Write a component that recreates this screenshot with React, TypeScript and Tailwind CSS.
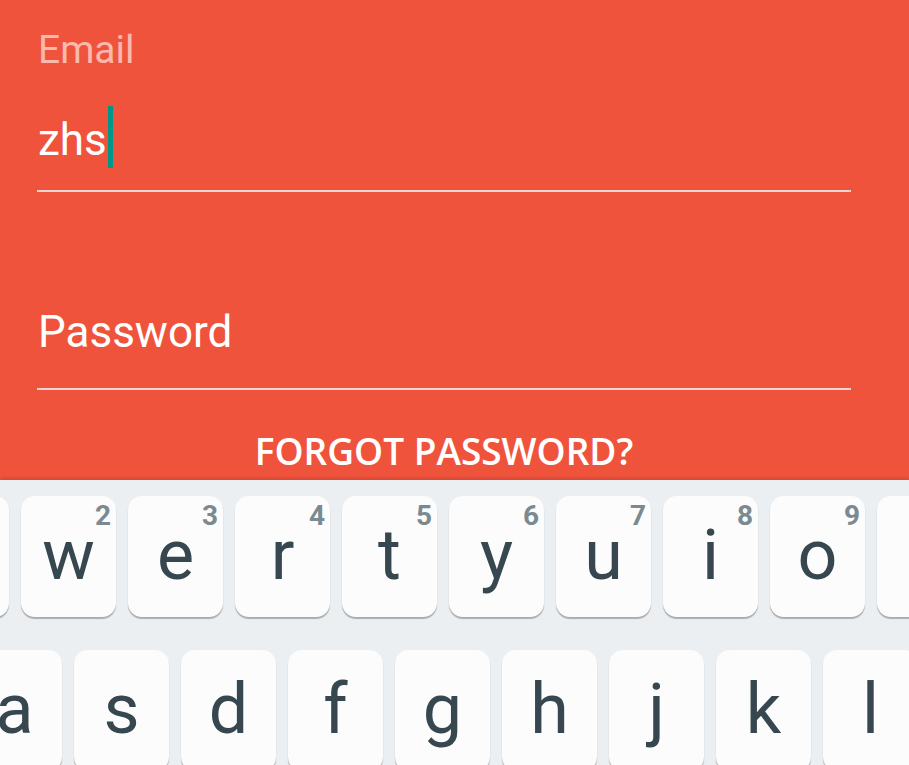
import React from "react";

const row1 = [
  ["q", "1"],
  ["w", "2"],
  ["e", "3"],
  ["r", "4"],
  ["t", "5"],
  ["y", "6"],
  ["u", "7"],
  ["i", "8"],
  ["o", "9"],
  ["p", "0"],
];
const row2 = ["a", "s", "d", "f", "g", "h", "j", "k", "l"];

function Key({ letter, hint }: { letter: string; hint?: string }) {
  return (
    <div className="relative w-[95px] h-[121px] shrink-0 rounded-[14px] bg-[#FCFCFC] shadow-[0_2px_1px_rgba(0,0,0,0.28)]">
      {hint && (
        <span className="absolute top-[6px] right-[5px] text-[28px] leading-[28px] font-bold text-[#7A8A90]">
          {hint}
        </span>
      )}
      <div className="flex justify-center pt-[24px] text-[70px] leading-[70px] text-[#37474F]">
        {letter}
      </div>
    </div>
  );
}

export default function App() {
  return (
    <div
      className="w-[909px] h-[765px] overflow-hidden bg-[#F0533C] flex flex-col"
      style={{ fontFamily: "Roboto, 'Noto Sans', sans-serif" }}
    >
      <div className="h-[480px] shrink-0 pl-[37px] flex flex-col">
        <div className="pt-[31px] text-[39px] leading-[39px] text-[#FBB8AC] pl-[1px]">
          Email
        </div>
        <div className="mt-[36px] flex items-start h-[62px]">
          <span className="mt-[12px] text-[44px] leading-[44px] text-white pl-[1px]">
            zhs
          </span>
          <span className="ml-[1px] w-[5px] h-[62px] bg-[#009688]" />
        </div>
        <div className="mt-[22px] w-[814px] h-[2px] bg-[#E2D6D4]" />
        <div className="mt-[118px] text-[44px] leading-[44px] text-white pl-[1px]">
          Password
        </div>
        <div className="mt-[34px] w-[814px] h-[2px] bg-[#E2D6D4]" />
        <div
          className="mt-[42px] w-[814px] text-center text-[37px] leading-[37px] font-semibold text-white"
          style={{ fontFamily: "'Open Sans', sans-serif" }}
        >
          FORGOT PASSWORD?
        </div>
      </div>
      <div className="flex-1 bg-[#ECEFF1] overflow-hidden pt-[16px] shadow-[0_-2px_3px_rgba(0,0,0,0.12)]">
        <div className="flex gap-[12px] ml-[-86px]">
          {row1.map(([l, n]) => (
            <Key key={l} letter={l} hint={n} />
          ))}
        </div>
        <div className="flex gap-[12px] ml-[-33px] mt-[33px]">
          {row2.map((l) => (
            <Key key={l} letter={l} />
          ))}
        </div>
      </div>
    </div>
  );
}
